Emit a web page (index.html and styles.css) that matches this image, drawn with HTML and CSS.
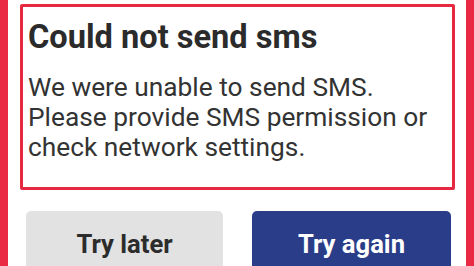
FILE: index.html
```html
<!DOCTYPE html>
<html>
<head>
<meta charset="utf-8">
<link rel="stylesheet" href="styles.css">
</head>
<body>
<div class="screen">
  <div class="edge"></div>
  <main class="content">
    <section class="dialog">
      <h1 class="title">Could not send sms</h1>
      <p class="message">We were unable to send SMS.<br>Please provide SMS permission or<br>check network settings.</p>
    </section>
    <div class="actions">
      <button class="btn btn-later">Try later</button>
      <button class="btn btn-again">Try again</button>
    </div>
  </main>
  <div class="edge"></div>
</div>
</body>
</html>
```
FILE: styles.css
```css
html, body {
  margin: 0;
  padding: 0;
  background: #ffffff;
  overflow: hidden;
}
.screen {
  display: flex;
  width: 474px;
  height: 266px;
  overflow: hidden;
  font-family: Roboto, "Noto Sans", sans-serif;
}
.edge {
  width: 8px;
  background: #ea2a44;
  flex: none;
}
.content {
  flex: 1;
  min-width: 0;
  display: flex;
  flex-direction: column;
  padding: 4px 11px 0 12px;
}
.dialog {
  flex: none;
  border: 3px solid #e62840;
  border-radius: 2px;
  height: 186px;
  box-sizing: border-box;
  padding: 12px 5px 0 5px;
}
.title {
  margin: 0;
  font-size: 32.6px;
  line-height: 36px;
  font-weight: 700;
  color: #2b2b2b;
}
.message {
  margin: 17px 0 0 0;
  font-size: 26.3px;
  line-height: 30px;
  color: #333333;
  white-space: nowrap;
}
.actions {
  flex: none;
  display: flex;
  gap: 29px;
  margin-top: 21px;
  padding: 0 4px 0 6px;
}
.btn {
  flex: none;
  width: 197px;
  border: none;
  border-radius: 5px;
  font-family: Roboto, "Noto Sans", sans-serif;
  font-size: 25.6px;
  line-height: 28px;
  font-weight: 700;
  padding: 19px 0 23px 0;
}
.btn-later {
  background: #e2e2e2;
  color: #2c2c2c;
}
.btn-again {
  width: 199px;
  background: #2a3d88;
  color: #ffffff;
}
```
